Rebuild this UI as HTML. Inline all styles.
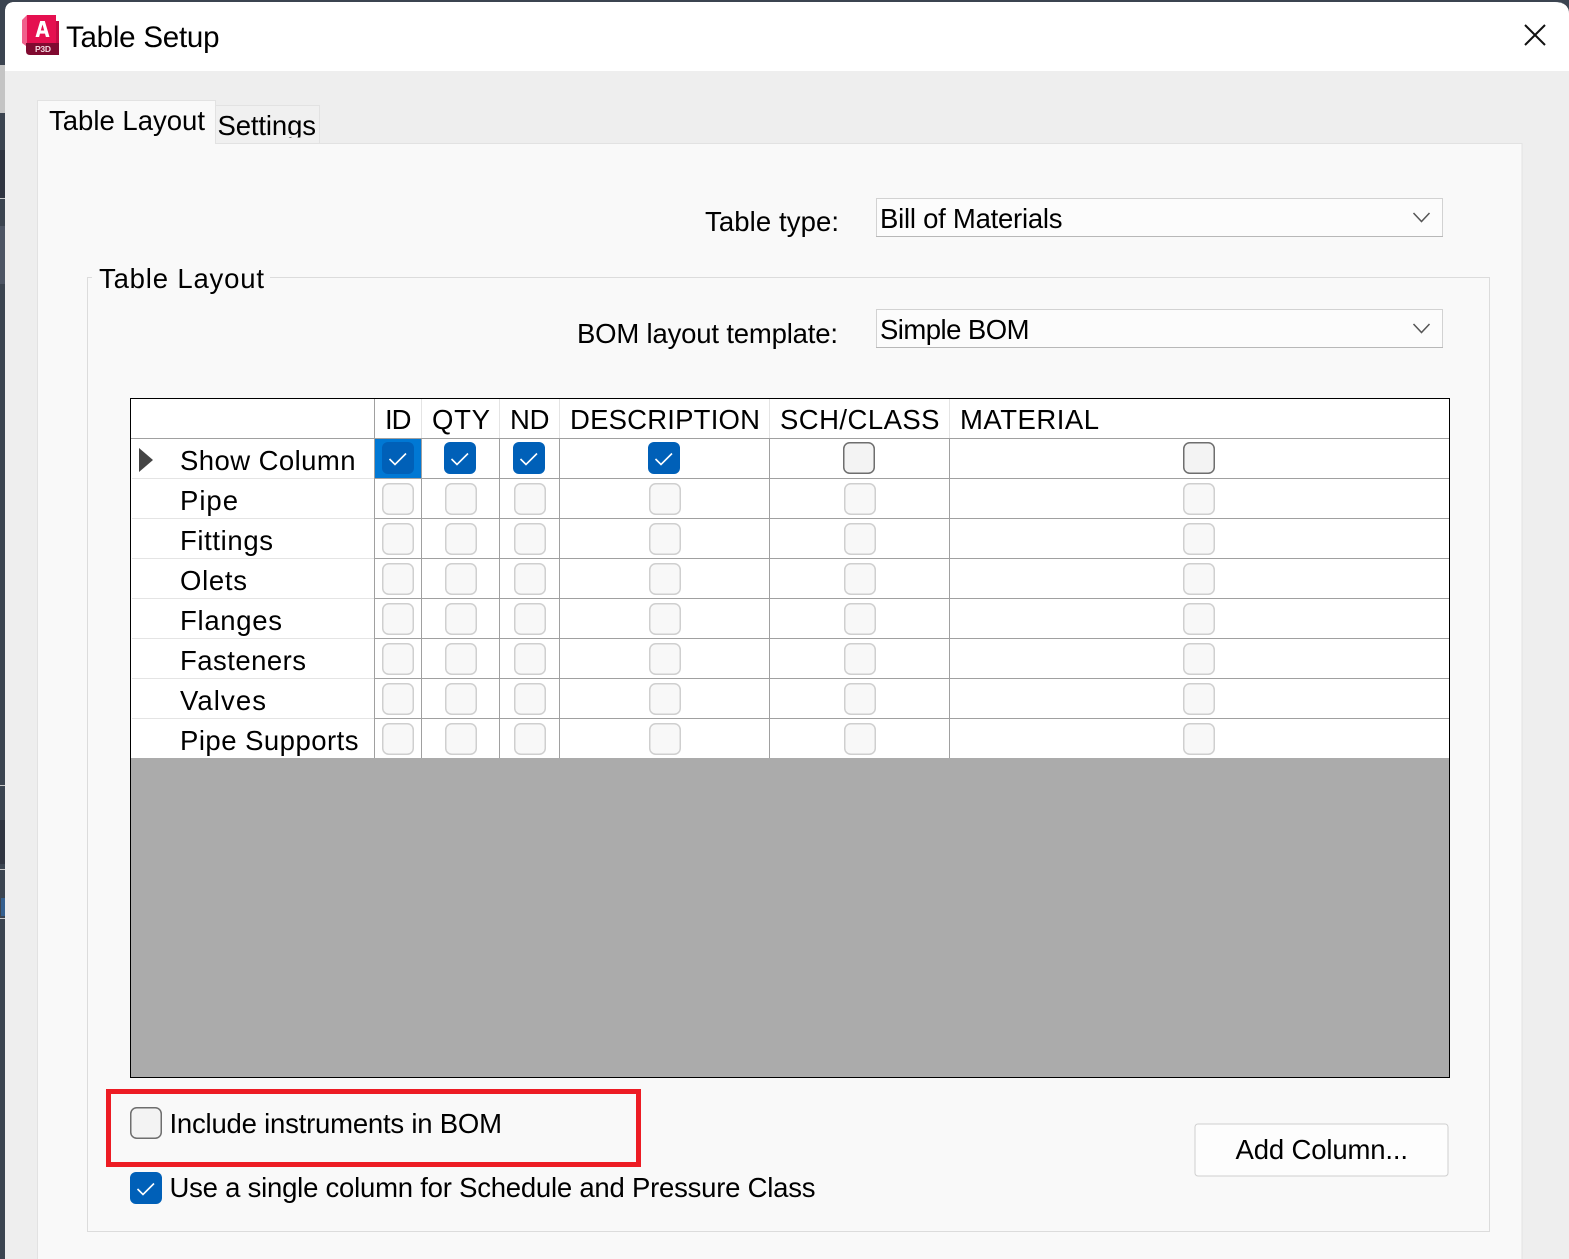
<!DOCTYPE html>
<html lang="en"><head><meta charset="utf-8"><title>Table Setup</title>
<style>
html,body{margin:0;padding:0;background:#3b4450;width:1569px;height:1259px;overflow:hidden}
svg{display:block}
text{font-family:"Liberation Sans",sans-serif;font-size:27.500px;fill:#000}
</style></head><body>
<svg width="1569" height="1259" viewBox="0 0 1569 1259" xmlns="http://www.w3.org/2000/svg">
<defs>
<clipPath id="setclip"><rect x="215" y="100" width="110" height="37.5"/></clipPath>
<g id="off"><rect x="0.75" y="0.75" width="30.5" height="30.5" rx="6" fill="#f8f8f8" stroke="#cfcfcf" stroke-width="1.5"/></g>
<g id="on"><rect width="32" height="32" rx="6" fill="#0060b8"/><path d="M7.5 17L13 22.5L24 11.5" fill="none" stroke="#fff" stroke-width="1.6"/></g>
<g id="dark"><rect x="0.75" y="0.75" width="30.5" height="30.5" rx="6" fill="#f3f3f3" stroke="#6e6e6e" stroke-width="1.5"/></g>
<g id="row"><use href="#off" x="382"/><use href="#off" x="445"/><use href="#off" x="514"/><use href="#off" x="649"/><use href="#off" x="844"/><use href="#off" x="1183"/></g>
</defs>
<!-- backdrop -->
<rect width="1569" height="1259" fill="#3b4450"/>
<rect x="0" y="65" width="5" height="48" fill="#c4c4c4"/>
<rect x="0" y="150" width="5" height="48" fill="#2f3440"/>
<rect x="0" y="198" width="5" height="1" fill="#c8c8c8"/>
<rect x="0" y="226" width="5" height="58" fill="#4d5564"/>
<rect x="0" y="785" width="5" height="1" fill="#c8c8c8"/>
<rect x="0" y="820" width="5" height="44" fill="#2f3440"/>
<rect x="0" y="869" width="5" height="1" fill="#c8c8c8"/>
<rect x="1" y="898" width="4" height="18" fill="#35608f"/>
<rect x="0" y="918" width="5" height="1" fill="#c8c8c8"/>
<!-- dialog -->
<path d="M5 1259V12Q5 2 15 2H1554Q1569 2 1569 14V1259Z" fill="#eeeeee"/>
<path d="M5 71V12Q5 2 15 2H1554Q1569 2 1569 14V71Z" fill="#ffffff"/>
<!-- logo -->
<path d="M22 20L27 15V43L26 46L22 43Z" fill="#f0608c"/>
<rect x="27" y="15" width="29" height="28" fill="#e51050"/>
<path d="M56 21H59V43H56Z" fill="#c40c44"/>
<path d="M26 43H59V55H30Q26 55 26 51Z" fill="#800a30"/>
<path d="M35.500 37L40.200 21H44.800L49.500 37H45.900L45 33.600H40L39.100 37ZM40.800 30.500H44.200L42.500 24.500Z" fill="#fff"/>
<text x="35" y="52" style="font-size:8.500px;font-weight:bold;fill:#f2d5de" textLength="16">P3D</text>
<text x="66" y="47" style="font-size:29.500px" textLength="153.500">Table Setup</text>
<path d="M1525 25L1545 45M1545 25L1525 45" stroke="#111" stroke-width="2" fill="none"/>
<!-- tabs -->
<rect x="215.500" y="105.500" width="104" height="38" fill="#f0f0f0" stroke="#e2e2e2"/>
<rect x="37.500" y="143.500" width="1484.500" height="1120" fill="#f9f9f9" stroke="#e2e2e2"/>
<path d="M37.500 144V100.500H215.500V144" fill="#f9f9f9" stroke="#e2e2e2"/>
<rect x="38" y="140" width="177" height="6" fill="#f9f9f9"/>
<text x="49" y="130" textLength="156">Table Layout</text>
<g clip-path="url(#setclip)"><text x="217.500" y="135" textLength="98.500">Settings</text></g>
<!-- table type -->
<text x="705" y="231" textLength="134">Table type:</text>
<rect x="876.500" y="198.500" width="566" height="38" fill="#fcfcfc" stroke="#d2d2d2"/>
<path d="M876 236.500H1443" stroke="#b8b8b8"/>
<text x="880" y="228" textLength="182.500">Bill of Materials</text>
<path d="M1413.500 213L1421.500 221.500L1429.500 213" fill="none" stroke="#555" stroke-width="1.5"/>
<!-- group -->
<path d="M92 277.500H87.500V1231.500H1489.500V277.500H270" fill="none" stroke="#dcdcdc"/>
<text x="99" y="288" textLength="165">Table Layout</text>
<text x="577" y="343" textLength="261">BOM layout template:</text>
<rect x="876.500" y="309.500" width="566" height="38" fill="#fcfcfc" stroke="#d2d2d2"/>
<path d="M876 347.500H1443" stroke="#b8b8b8"/>
<text x="880" y="339" textLength="149.500">Simple BOM</text>
<path d="M1413.500 324L1421.500 332.500L1429.500 324" fill="none" stroke="#555" stroke-width="1.5"/>
<!-- grid -->
<rect x="130.500" y="398.500" width="1319" height="679" fill="#ababab" stroke="#000"/>
<rect x="131" y="399" width="1318" height="359" fill="#fff"/>
<g stroke="#e4e4e4" fill="none">
<path d="M421.500 399V438M499.500 399V438M559.500 399V438M769.500 399V438M949.500 399V438"/>
<path d="M132 478.500H374M132 518.500H374M132 558.500H374M132 598.500H374M132 638.500H374M132 678.500H374M132 718.500H374"/>
</g>
<rect x="375" y="439" width="46" height="39" fill="#0078d4"/>
<g stroke="#a0a0a0" fill="none">
<path d="M131 438.500H1449M374 478.500H1449M374 518.500H1449M374 558.500H1449M374 598.500H1449M374 638.500H1449M374 678.500H1449M374 718.500H1449"/>
<path d="M374.500 399V758M421.500 438V758M499.500 438V758M559.500 438V758M769.500 438V758M949.500 438V758"/>
</g>
<path d="M139 448L153 460L139 472Z" fill="#444"/>
<text x="385" y="429" textLength="26.500">ID</text>
<text x="432" y="429" textLength="58">QTY</text>
<text x="510" y="429" textLength="39.500">ND</text>
<text x="570" y="429" textLength="190">DESCRIPTION</text>
<text x="780" y="429" textLength="159.500">SCH/CLASS</text>
<text x="960" y="429" textLength="139">MATERIAL</text>
<text x="180" y="470" textLength="175.500">Show Column</text>
<text x="180" y="510" textLength="58">Pipe</text>
<text x="180" y="550" textLength="93">Fittings</text>
<text x="180" y="590" textLength="67">Olets</text>
<text x="180" y="630" textLength="102">Flanges</text>
<text x="180" y="670" textLength="126">Fasteners</text>
<text x="180" y="710" textLength="86">Valves</text>
<text x="180" y="750" textLength="178.500">Pipe Supports</text>
<use href="#on" x="382" y="442"/><use href="#on" x="444" y="442"/><use href="#on" x="513" y="442"/><use href="#on" x="648" y="442"/>
<use href="#dark" x="843" y="442"/><use href="#dark" x="1183" y="442"/>
<use href="#row" y="483"/><use href="#row" y="523"/><use href="#row" y="563"/><use href="#row" y="603"/><use href="#row" y="643"/><use href="#row" y="683"/><use href="#row" y="723"/>
<!-- bottom -->
<rect x="108.500" y="1091.500" width="530" height="73" fill="none" stroke="#ed1c24" stroke-width="5"/>
<use href="#dark" x="130" y="1107"/>
<text x="169.500" y="1133" textLength="332.500">Include instruments in BOM</text>
<use href="#on" x="130" y="1172"/>
<text x="169.500" y="1197" textLength="646">Use a single column for Schedule and Pressure Class</text>
<rect x="1195" y="1124" width="253" height="52" rx="3" fill="#fdfdfd" stroke="#cfcfcf"/>
<text x="1235.500" y="1159" textLength="172.500">Add Column...</text>
</svg>
</body></html>
